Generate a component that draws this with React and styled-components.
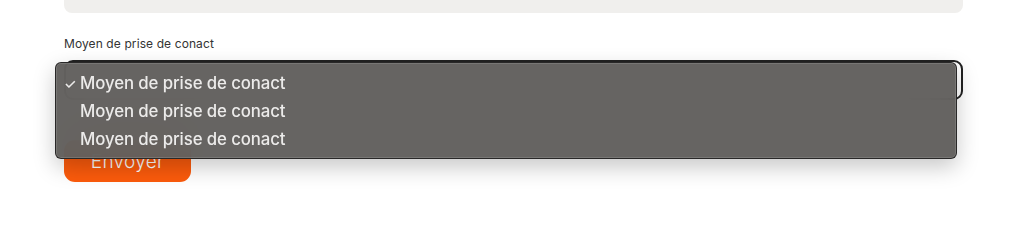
import React, { useState } from 'react';
import styled, { createGlobalStyle } from 'styled-components';

const GlobalStyle = createGlobalStyle`
  html, body {
    margin: 0;
    padding: 0;
    background: #ffffff;
  }
  body {
    font-family: Inter, "Noto Sans", sans-serif;
  }
`;

const Page = styled.div`
  width: 1026px;
  height: 240px;
  padding: 0 63px 0 64px;
  box-sizing: border-box;
  display: flex;
  flex-direction: column;
`;

const TextAreaTail = styled.div`
  height: 13px;
  background: #f0efed;
  border-radius: 0 0 8px 8px;
`;

const Label = styled.label`
  margin-top: 24px;
  font-size: 12px;
  line-height: 14px;
  color: #333;
  letter-spacing: 0.1px;
`;

const Field = styled.div`
  position: relative;
  margin-top: 9px;
`;

const SelectBox = styled.div`
  height: 40px;
  border: 2px solid #222;
  border-radius: 9px;
  box-sizing: border-box;
  background: #fff;
`;

const Menu = styled.ul`
  position: absolute;
  z-index: 2;
  top: 2px;
  left: -9px;
  width: 902px;
  margin: 0;
  padding: 6px 0 5px;
  list-style: none;
  box-sizing: border-box;
  background: rgba(96, 94, 92, 0.96);
  backdrop-filter: blur(24px);
  border: 1px solid rgba(30, 30, 30, 0.85);
  border-radius: 6px;
  box-shadow: inset 0 0 0 1px rgba(255, 255, 255, 0.12), 0 8px 22px rgba(0, 0, 0, 0.22);
`;

const Option = styled.li`
  display: flex;
  align-items: center;
  height: 28px;
  padding-left: 8px;
  font-size: 16.8px;
  font-weight: 500;
  letter-spacing: -0.1px;
  color: #ecebea;
  cursor: default;
`;

const Check = styled.span`
  width: 16px;
  font-size: 14px;
  color: #ecebea;
  visibility: ${p => (p.$on ? 'visible' : 'hidden')};
`;

const SubmitButton = styled.button`
  align-self: flex-start;
  margin-top: 40px;
  width: 127px;
  height: 42px;
  border: none;
  border-radius: 11px;
  background: #fc5b0c;
  color: #fff;
  font-family: Inter, "Noto Sans", sans-serif;
  font-size: 19px;
  font-weight: 300;
  letter-spacing: 0.3px;
`;

const options = ['Moyen de prise de conact', 'Moyen de prise de conact', 'Moyen de prise de conact'];

const App = () => {
  const [selected, setSelected] = useState(0);

  return (
    <>
      <GlobalStyle />
      <Page>
        <TextAreaTail />
        <Label>Moyen de prise de conact</Label>
        <Field>
          <SelectBox />
          <Menu>
            {options.map((o, i) => (
              <Option key={i} onClick={() => setSelected(i)}>
                <Check $on={selected === i}>✓</Check>
                {o}
              </Option>
            ))}
          </Menu>
        </Field>
        <SubmitButton type="submit">Envoyer</SubmitButton>
      </Page>
    </>
  );
};

export default App;
